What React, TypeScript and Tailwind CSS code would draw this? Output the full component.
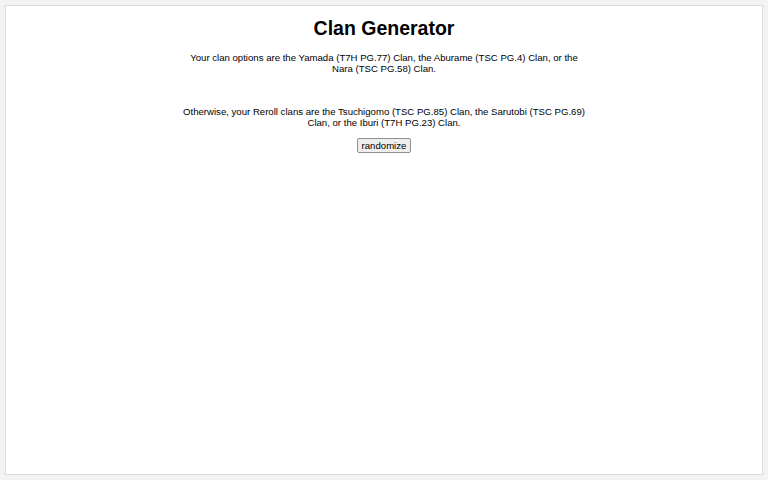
import { useState } from "react"

const clans = [
  { name: "Yamada", ref: "T7H PG.77" },
  { name: "Aburame", ref: "TSC PG.4" },
  { name: "Nara", ref: "TSC PG.58" },
  { name: "Tsuchigomo", ref: "TSC PG.85" },
  { name: "Sarutobi", ref: "TSC PG.69" },
  { name: "Iburi", ref: "T7H PG.23" },
]

const label = (c: { name: string; ref: string }) => `${c.name} (${c.ref}) Clan`

export default function App() {
  const [picks, setPicks] = useState(clans)

  const randomize = () => {
    const copy = [...clans]
    for (let i = copy.length - 1; i > 0; i--) {
      const j = Math.floor(Math.random() * (i + 1))
      ;[copy[i], copy[j]] = [copy[j], copy[i]]
    }
    setPicks(copy)
  }

  return (
    <div className="min-h-[480px] bg-[#f2f2f2] p-[5px] font-['Liberation_Sans',Arial,sans-serif] text-black">
      <div className="min-h-[470px] bg-white border border-[#dcdcdc] flex flex-col items-center pt-[10px]">
        <h1 className="text-[19.5px] leading-[24px] font-bold">Clan Generator</h1>

        <p className="mt-[12px] w-[405px] text-center text-[9.6px] leading-[11px]">
          Your clan options are the {label(picks[0])}, the {label(picks[1])}, or the {label(picks[2])}.
        </p>

        <p className="mt-[32px] w-[405px] text-center text-[9.6px] leading-[11px]">
          Otherwise, your Reroll clans are the {label(picks[3])}, the {label(picks[4])}, or the {label(picks[5])}.
        </p>

        <button
          onClick={randomize}
          className="mt-[10px] px-[4px] h-[15px] text-[9.6px] leading-[13px] bg-[#efefef] border border-[#8f8f8f] rounded-[2px]"
        >
          randomize
        </button>
      </div>
    </div>
  )
}
